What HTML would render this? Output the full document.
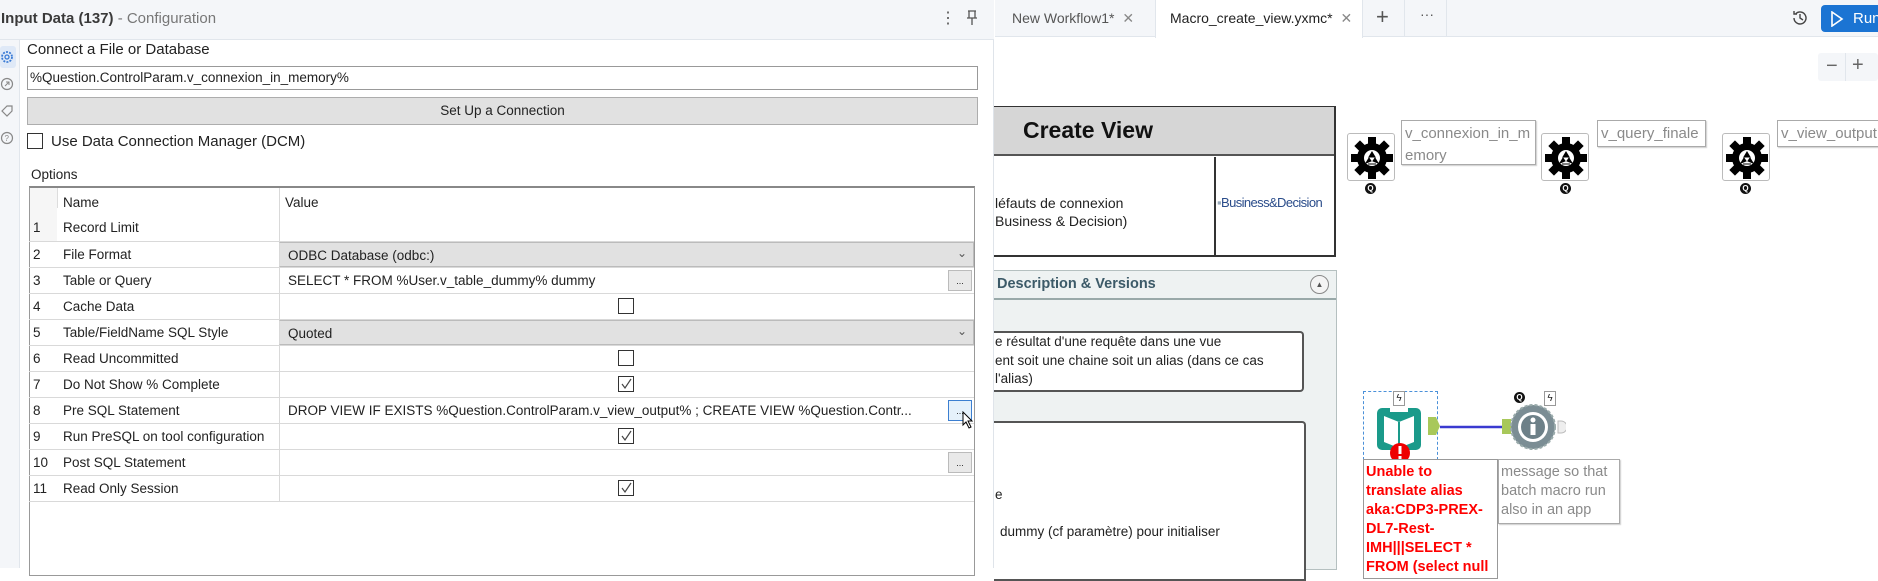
<!DOCTYPE html>
<html><head><meta charset="utf-8"><style>
*{box-sizing:border-box;margin:0;padding:0}
body{width:1878px;height:568px;overflow:hidden;background:#fff;font-family:"Liberation Sans",Arial,sans-serif;font-size:13px;color:#222;position:relative}
.a{position:absolute}
.t{white-space:nowrap}
.row{position:absolute;left:29px;width:945px;height:26px;border-bottom:1px solid #d9d9d9}
.row .n{position:absolute;left:4px;top:5px;font-size:13.5px}
.row .nm{position:absolute;left:34px;top:5px;font-size:13.5px}
.row .v{position:absolute;left:250px;right:0;top:0;height:25px;border-left:1px solid #d9d9d9}
.v .tx{position:absolute;left:8px;top:5px;font-size:13.5px;white-space:nowrap}
.cb{position:absolute;left:338px;top:4px;width:16px;height:16px;border:1px solid #333;background:#fff}
.dd{background:#e1e1e1;border:1px solid #bbb}
.btn3{position:absolute;right:2px;top:2px;width:24px;height:21px;background:#e9e9e9;border:1px solid #bbb;font-size:9px;text-align:center;line-height:20px}
.gear{position:absolute;width:48px;height:48px;border:1px solid #bbb;border-radius:3px;background:#fff}
.lbl{position:absolute;border:1px solid #aaa;background:#fff;color:#8a8a8a;font-size:15px;padding:2px 3px;line-height:22px;box-shadow:1px 1px 1px #ccc}
.q{position:absolute;width:11px;height:11px;border-radius:50%;background:#111;color:#fff;font-size:8px;font-weight:bold;text-align:center;line-height:11px}
</style></head><body>

<div class="a" style="left:0;top:0;width:994px;height:568px;background:#fff;border-right:1px solid #dfe4ea"></div>
<div class="a" style="left:0;top:0;width:994px;height:40px;background:#f4f6f9;border-bottom:1px solid #e1e6ec"></div>
<div class="a t" style="left:1px;top:10px;font-size:15px;color:#444"><b style="font-weight:600;color:#3a3a3a">Input Data (137)</b> <span style="color:#777">- Configuration</span></div>
<div class="a" style="left:940px;top:8px;font-size:16px;color:#555">&#8942;</div>
<div class="a" style="left:966px;top:10px;font-size:14px;color:#555">
<svg width="12" height="16" viewBox="0 0 12 16"><path d="M2 1h8M3 1v7h6V1M1 8h10M6 8v7" stroke="#555" stroke-width="1.3" fill="none"/></svg></div>
<div class="a" style="left:0;top:40px;width:20px;height:528px;background:#f4f6f9;border-right:1px solid #e1e6ec"></div>
<div class="a" style="left:0;top:46px;width:16px;height:22px;background:#dfe9f7;border-radius:3px"></div>
<svg class="a" style="left:0;top:48px" width="18" height="100" viewBox="0 0 18 100">
<circle cx="7" cy="9" r="5" fill="none" stroke="#3a7bd5" stroke-width="1.8" stroke-dasharray="2 1.2"/><circle cx="7" cy="9" r="2" fill="none" stroke="#3a7bd5" stroke-width="1.3"/>
<circle cx="7" cy="36" r="5.5" fill="none" stroke="#888" stroke-width="1.2"/><path d="M5 38l4-4M6 34h3v3" stroke="#888" fill="none"/>
<path d="M2 63l5-5h5v5l-5 5z" fill="none" stroke="#888" stroke-width="1.2"/>
<circle cx="7" cy="90" r="5.5" fill="none" stroke="#888" stroke-width="1.2"/><text x="4.5" y="93" font-size="8" fill="#888" font-family="Liberation Sans">?</text>
</svg>

<div class="a t" style="left:27px;top:41px;font-size:15px;color:#222">Connect a File or Database</div>
<div class="a" style="left:27px;top:66px;width:951px;height:24px;border:1px solid #999;background:#fff"></div>
<div class="a t" style="left:30px;top:70px;font-size:13.5px">%Question.ControlParam.v_connexion_in_memory%</div>
<div class="a" style="left:27px;top:97px;width:951px;height:28px;border:1px solid #adadad;background:#e1e1e1;text-align:center;line-height:26px;font-size:13.5px">Set Up a Connection</div>
<div class="a" style="left:27px;top:133px;width:16px;height:16px;border:1px solid #333;background:#fff"></div>
<div class="a t" style="left:51px;top:133px;font-size:15px">Use Data Connection Manager (DCM)</div>
<div class="a t" style="left:31px;top:167px;font-size:13.5px">Options</div>

<div class="a" style="left:29px;top:186px;width:946px;height:390px;border:1px solid #999;border-top:2px solid #888;background:#fff"></div>
<div class="a" style="left:30px;top:188px;width:27px;height:54px;background:#f6f6f6"></div>
<div class="a" style="left:57px;top:188px;width:1px;height:20px;background:#ddd"></div>
<div class="a" style="left:279px;top:188px;width:1px;height:53px;background:#d9d9d9"></div>
<div class="a t" style="left:63px;top:195px;font-size:13.5px">Name</div>
<div class="a t" style="left:285px;top:195px;font-size:13.5px">Value</div>
<div class="a t" style="left:33px;top:220px;font-size:13.5px">1</div>
<div class="a t" style="left:63px;top:220px;font-size:13.5px">Record Limit</div>
<div class="a" style="left:29px;top:241px;width:945px;height:1px;background:#d9d9d9"></div>

<div class="row" style="top:242px"><span class="n">2</span><span class="nm">File Format</span><div class="v dd"><span class="tx">ODBC Database (odbc:)</span><span class="a" style="right:6px;top:3px;font-size:12px;color:#555">&#8964;</span></div></div>
<div class="row" style="top:268px"><span class="n">3</span><span class="nm">Table or Query</span><div class="v"><span class="tx">SELECT * FROM %User.v_table_dummy% dummy</span><div class="btn3">...</div></div></div>
<div class="row" style="top:294px"><span class="n">4</span><span class="nm">Cache Data</span><div class="v"><div class="cb"></div></div></div>
<div class="row" style="top:320px"><span class="n">5</span><span class="nm">Table/FieldName SQL Style</span><div class="v dd"><span class="tx">Quoted</span><span class="a" style="right:6px;top:3px;font-size:12px;color:#555">&#8964;</span></div></div>
<div class="row" style="top:346px"><span class="n">6</span><span class="nm">Read Uncommitted</span><div class="v"><div class="cb"></div></div></div>
<div class="row" style="top:372px"><span class="n">7</span><span class="nm">Do Not Show % Complete</span><div class="v"><div class="cb"><svg width="14" height="14"><path d="M3 7l3 4 6-9" stroke="#444" stroke-width="1.2" fill="none"/></svg></div></div></div>
<div class="row" style="top:398px"><span class="n">8</span><span class="nm">Pre SQL Statement</span><div class="v"><span class="tx">DROP VIEW IF EXISTS %Question.ControlParam.v_view_output% ; CREATE VIEW %Question.Contr...</span><div class="btn3" style="background:#e5f1fb;border-color:#3c7fd1">...</div></div></div>
<div class="row" style="top:424px"><span class="n">9</span><span class="nm">Run PreSQL on tool configuration</span><div class="v"><div class="cb"><svg width="14" height="14"><path d="M3 7l3 4 6-9" stroke="#444" stroke-width="1.2" fill="none"/></svg></div></div></div>
<div class="row" style="top:450px"><span class="n">10</span><span class="nm">Post SQL Statement</span><div class="v"><div class="btn3">...</div></div></div>
<div class="row" style="top:476px"><span class="n">11</span><span class="nm">Read Only Session</span><div class="v"><div class="cb"><svg width="14" height="14"><path d="M3 7l3 4 6-9" stroke="#444" stroke-width="1.2" fill="none"/></svg></div></div></div>
<svg class="a" style="left:962px;top:411px" width="12" height="18"><path d="M1 1v13l3-3 3 6 2-1-3-6h4z" fill="#fff" stroke="#000"/></svg>

<div class="a" style="left:995px;top:0;width:883px;height:37px;background:#f4f6f9;border-bottom:1px solid #e1e6ec"></div>
<div class="a t" style="left:1012px;top:10px;font-size:14px;color:#555">New Workflow1* <span style="color:#888;margin-left:4px">✕</span></div>
<div class="a" style="left:1155px;top:0;width:208px;height:38px;background:#fff;border-left:1px solid #e1e6ec;border-right:1px solid #e1e6ec"></div>
<div class="a t" style="left:1170px;top:10px;font-size:14px;color:#222">Macro_create_view.yxmc* <span style="color:#888;margin-left:4px">✕</span></div>
<div class="a" style="left:1376px;top:4px;font-size:22px;color:#555">+</div>
<div class="a" style="left:1404px;top:0;width:1px;height:37px;background:#e1e6ec"></div>
<div class="a" style="left:1420px;top:6px;font-size:14px;color:#555">···</div>
<div class="a" style="left:1446px;top:0;width:1px;height:37px;background:#e1e6ec"></div>
<svg class="a" style="left:1791px;top:9px" width="18" height="18" viewBox="0 0 18 18"><path d="M3 9a6 6 0 1 0 2-4.5M3 2v3h3M9 5v4l3 2" stroke="#444" stroke-width="1.4" fill="none"/></svg>
<div class="a" style="left:1821px;top:5px;width:70px;height:27px;background:#1b74d3;border-radius:4px"></div>
<svg class="a" style="left:1830px;top:11px" width="14" height="16"><path d="M2 1l10 7-10 7z" stroke="#fff" stroke-width="1.6" fill="none"/></svg>
<div class="a t" style="left:1853px;top:10px;font-size:15px;color:#fff">Run</div>
<div class="a" style="left:1818px;top:53px;width:60px;height:28px;background:#f4f6f9;border-radius:3px"></div>
<div class="a" style="left:1826px;top:55px;font-size:20px;color:#666">−</div>
<div class="a" style="left:1845px;top:53px;width:1px;height:28px;background:#e1e6ec"></div>
<div class="a" style="left:1852px;top:54px;font-size:20px;color:#666">+</div>

<div class="a" style="left:994px;top:106px;width:342px;height:151px;border:2px solid #333;border-left:none;background:#fff"></div>
<div class="a" style="left:994px;top:107px;width:340px;height:49px;background:#d6d6d6;border-bottom:2px solid #555"></div>
<div class="a t" style="left:1023px;top:117px;font-size:23px;font-weight:bold;color:#111">Create View</div>
<div class="a" style="left:1214px;top:157px;width:2px;height:98px;background:#333"></div>
<div class="a t" style="left:995px;top:195px;font-size:14px">léfauts de connexion</div>
<div class="a t" style="left:995px;top:213px;font-size:14px">Business &amp; Decision)</div>
<div class="a t" style="left:1217px;top:195px;font-size:13px;color:#2a4c8a;letter-spacing:-0.6px"><span style="color:#9ab">▪</span>Business&amp;Decision</div>

<div class="a" style="left:994px;top:270px;width:343px;height:300px;background:#eef2f2;border:1px solid #b5c0c0;border-left:none"></div>
<div class="a" style="left:994px;top:270px;width:342px;height:30px;border-bottom:2px solid #99a9a9"></div>
<div class="a t" style="left:997px;top:276px;font-size:14.5px;font-weight:bold;color:#3c5a68">Description &amp; Versions</div>
<div class="a" style="left:1310px;top:275px;width:19px;height:19px;border-radius:50%;border:1px solid #888;background:#f4f4f4;font-size:8px;text-align:center;line-height:17px;color:#555">▲</div>
<div class="a" style="left:994px;top:331px;width:310px;height:61px;background:#fff;border:2px solid #555;border-left:none;border-radius:0 4px 4px 0"></div>
<div class="a t" style="left:995px;top:334px;font-size:13.5px">e résultat d'une requête dans une vue</div>
<div class="a t" style="left:995px;top:353px;font-size:13.5px">ent soit une chaine soit un alias (dans ce cas</div>
<div class="a t" style="left:995px;top:371px;font-size:13.5px">l'alias)</div>
<div class="a" style="left:994px;top:421px;width:312px;height:160px;background:#fff;border:2px solid #555;border-left:none;border-radius:0 4px 0 0"></div>
<div class="a t" style="left:995px;top:487px;font-size:13.5px">e</div>
<div class="a t" style="left:1000px;top:524px;font-size:13.5px">dummy (cf paramètre) pour initialiser</div>

<svg width="0" height="0" style="position:absolute"><defs>
<g id="g"><g transform="translate(24,24)">
<circle r="15" fill="#000"/>
<g fill="#000"><rect x="-4" y="-21" width="8" height="9"/><rect x="-4" y="-21" width="8" height="9" transform="rotate(45)"/><rect x="-4" y="-21" width="8" height="9" transform="rotate(90)"/><rect x="-4" y="-21" width="8" height="9" transform="rotate(135)"/><rect x="-4" y="-21" width="8" height="9" transform="rotate(180)"/><rect x="-4" y="-21" width="8" height="9" transform="rotate(225)"/><rect x="-4" y="-21" width="8" height="9" transform="rotate(270)"/><rect x="-4" y="-21" width="8" height="9" transform="rotate(315)"/></g>
<circle r="8" fill="#fff"/>
<path d="M0-6l3 5h-6zM-6 5l3-5 2 3zM6 5l-3-5-2 3zM-4 6h8" stroke="#000" stroke-width="1" fill="#000"/>
</g></g></defs></svg>
<div class="gear" style="left:1347px;top:133px"><svg width="48" height="48"><use href="#g"/></svg></div>
<div class="q" style="left:1365px;top:183px">Q</div>
<div class="lbl" style="left:1401px;top:120px;width:135px;height:45px">v_connexion_in_m<br>emory</div>
<div class="gear" style="left:1541px;top:133px"><svg width="48" height="48"><use href="#g"/></svg></div>
<div class="q" style="left:1560px;top:183px">Q</div>
<div class="lbl" style="left:1597px;top:120px;width:109px;height:27px">v_query_finale</div>
<div class="gear" style="left:1722px;top:133px"><svg width="48" height="48"><use href="#g"/></svg></div>
<div class="q" style="left:1740px;top:183px">Q</div>
<div class="lbl" style="left:1777px;top:120px;width:110px;height:27px">v_view_output</div>

<div class="a" style="left:1363px;top:391px;width:75px;height:69px;border:1px dashed #4a90d9"></div>
<div class="a" style="left:1393px;top:391px;width:12px;height:15px;border:1px solid #999;background:#fff;font-size:10px;text-align:center;line-height:13px">ϟ</div>
<svg class="a" style="left:1376px;top:406px" width="48" height="60"><rect x="1" y="2" width="44" height="42" rx="5" fill="#1a9a8a"/><rect x="14" y="0" width="18" height="6" fill="#fff"/><path d="M8 10l15 6 15-6v26l-15 6-15-6z" fill="#fff"/><path d="M23 16v26" stroke="#1a9a8a" stroke-width="2"/><circle cx="24" cy="47" r="10" fill="#e00"/><rect x="22.5" y="40" width="3" height="8" fill="#fff"/><rect x="22.5" y="50" width="3" height="3" fill="#fff"/></svg>
<svg class="a" style="left:1428px;top:416px" width="84" height="20"><path d="M0 1h8l4 9-4 9h-8z" fill="#a8c85a"/><path d="M12 11h62" stroke="#3a3ad0" stroke-width="2.5"/><rect x="74" y="3" width="9" height="15" fill="#a8c85a"/></svg>
<svg class="a" style="left:1510px;top:404px" width="56" height="48"><circle cx="23" cy="23" r="22" fill="#7b8d94" stroke="#9aa" stroke-dasharray="3 2" stroke-width="2"/><circle cx="23" cy="23" r="15" fill="#fff"/><circle cx="23" cy="23" r="12" fill="#6d8088"/><circle cx="23" cy="16" r="2.5" fill="#fff"/><rect x="20.5" y="20" width="5" height="11" fill="#fff"/><path d="M48 17h3a4 4 0 0 1 0 12h-3z" fill="#eee" stroke="#bbb"/></svg>
<div class="q" style="left:1514px;top:392px">Q</div>
<div class="a" style="left:1544px;top:391px;width:12px;height:15px;border:1px solid #999;background:#fff;font-size:10px;text-align:center;line-height:13px">ϟ</div>
<div class="a" style="left:1363px;top:459px;width:135px;height:120px;border:1px solid #999;background:#fff;color:#f00;font-weight:bold;font-size:14.5px;line-height:19px;padding:3px 2px">Unable to<br>translate alias<br>aka:CDP3-PREX-<br>DL7-Rest-<br>IMH|||SELECT *<br>FROM (select null</div>
<div class="lbl" style="left:1498px;top:459px;width:122px;height:65px;line-height:19px;font-size:14.5px;padding:3px 2px">message so that<br>batch macro run<br>also in an app</div>
</body></html>
